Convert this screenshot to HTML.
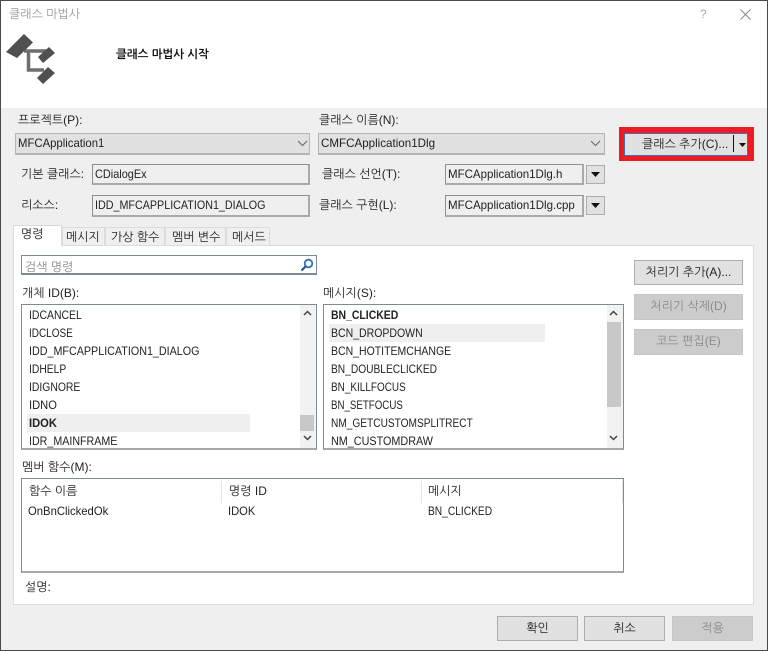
<!DOCTYPE html>
<html lang="ko"><head><meta charset="utf-8"><style>
html,body{margin:0;padding:0}
body{width:768px;height:651px;position:relative;overflow:hidden;background:#efefef;font:12px/16px "Liberation Sans","NanumGothic","Noto Sans CJK KR",sans-serif;color:#222;filter:blur(.25px)}
div,span{position:absolute;box-sizing:border-box}
span{white-space:nowrap;transform-origin:left center}
.btn{background:#e1e1e1;border:1px solid #adadad;text-align:center;line-height:23px}
.dis{background:#ccc;border-color:#c6c6c6;color:#8a8a8a}
.ed{background:#efefef;border:1px solid #8f8f8f;border-bottom-width:2px;border-right-width:2px;border-right-color:#aaa;border-bottom-color:#aaa}
.ed span{left:2px;top:2px;line-height:15px}
.cb{background:#e1e1e1;border:1px solid #b5b5b5;border-bottom-width:2px}
.cb span{left:2px;top:0;line-height:18px}
.lst{background:#fff;border:1px solid #7f8a99;border-bottom-width:2px;border-bottom-color:#a5a9ae}
.tab{background:#efefef;border:1px solid #dcdcdc;border-bottom:0;top:227px;height:18px}
.tab span{top:1px;line-height:16px}
.sb{background:#f2f2f2}
.it{left:7px;height:18px;line-height:18px}
.m{left:7px}
</style></head><body>
<div style="left:0;top:0;width:768px;height:108px;background:#fff"></div>
<span style="left:9px;top:6px;color:#9a9a9a">클래스 마법사</span>
<span style="left:700px;top:6px;color:#a8a8a8">?</span>
<svg style="position:absolute;left:740px;top:9px" width="11" height="11"><path d="M.5.5l10 10M10.500.5l-10 10" stroke="#8c8c8c" fill="none"/></svg>
<svg style="position:absolute;left:0;top:25px" width="70" height="70" viewBox="0 0 70 70"><path d="M24 26H47M28.500 26V45H44" stroke="#6e6e6e" stroke-width="3.500" fill="none"/><g fill="#505050"><path d="M6 27L24 9l9 8.500L17 33z"/><path d="M38 32L49 22l6 6-12 10z"/><path d="M37 53l11-11 7 6-12 11z"/></g></svg>
<span style="left:116px;top:47px;font-weight:bold;color:#111;font-size:11.500px">클래스 마법사 시작</span>

<span style="left:18px;top:112px">프로젝트(P):</span>
<span style="left:319px;top:112px">클래스 이름(N):</span>
<div class="cb" style="left:15px;top:133px;width:295px;height:22px"><span style="transform:scaleX(.945)">MFCApplication1</span></div>
<div class="cb" style="left:318px;top:133px;width:287px;height:22px"><span style="transform:scaleX(.966)">CMFCApplication1Dlg</span></div>
<svg style="position:absolute;left:297px;top:140px" width="11" height="8"><path d="M1 1l4.500 4.500L10 1" stroke="#666" fill="none"/></svg>
<svg style="position:absolute;left:590px;top:140px" width="11" height="8"><path d="M1 1l4.500 4.500L10 1" stroke="#666" fill="none"/></svg>
<span style="left:21px;top:166px">기본 클래스:</span>
<span style="left:21px;top:197px">리소스:</span>
<div class="ed" style="left:92px;top:164px;width:218px;height:21px"><span style="transform:scaleX(.91)">CDialogEx</span></div>
<div class="ed" style="left:92px;top:195px;width:218px;height:22px"><span style="transform:scaleX(.895)">IDD_MFCAPPLICATION1_DIALOG</span></div>
<span style="left:322px;top:166px">클래스 선언(T):</span>
<span style="left:319px;top:197px">클래스 구현(L):</span>
<div class="ed" style="left:445px;top:164px;width:139px;height:21px"><span style="transform:scaleX(.958)">MFCApplication1Dlg.h</span></div>
<div class="ed" style="left:445px;top:195px;width:139px;height:22px"><span style="transform:scaleX(.96)">MFCApplication1Dlg.cpp</span></div>
<div class="btn" style="left:586px;top:165px;width:19px;height:19px"></div>
<div class="btn" style="left:586px;top:196px;width:19px;height:19px"></div>
<svg style="position:absolute;left:591px;top:172px" width="9" height="5"><path d="M0 0h9L4.500 5z" fill="#111"/></svg>
<svg style="position:absolute;left:591px;top:203px" width="9" height="5"><path d="M0 0h9L4.500 5z" fill="#111"/></svg>

<div style="left:619px;top:127px;width:135px;height:34px;background:#ed1c24"></div>
<div style="left:624px;top:133px;width:124px;height:23px;background:#e1e1e1;border:1px solid #3f6fb5"></div>
<span style="left:642px;top:136px">클래스 추가(C)...</span>
<div style="left:733px;top:135px;width:1px;height:17px;background:#111"></div>
<svg style="position:absolute;left:739px;top:143px" width="7" height="4"><path d="M0 0h7L3.500 4z" fill="#111"/></svg>

<div style="left:13px;top:245px;width:741px;height:360px;background:#fff;border:1px solid #dcdcdc"></div>
<div class="tab" style="left:13px;top:225px;width:49px;height:21px;background:#fff;border-color:#d9d9d9"><span style="left:7px;top:0">명령</span></div>
<div class="tab" style="left:62px;width:43px"><span style="left:3px">메시지</span></div>
<div class="tab" style="left:105px;width:60px"><span style="left:5px">가상 함수</span></div>
<div class="tab" style="left:165px;width:61px"><span style="left:6px">멤버 변수</span></div>
<div class="tab" style="left:226px;width:44px"><span style="left:5px">메서드</span></div>

<div style="left:21px;top:255px;width:296px;height:20px;background:#fff;border:1px solid #7f8a99;border-bottom-width:2px"></div>
<span style="left:25px;top:259px;color:#8a8a8a">검색 명령</span>
<svg style="position:absolute;left:300px;top:258px" width="14" height="14"><circle cx="8.500" cy="5.500" r="3.800" fill="none" stroke="#2f74b8" stroke-width="1.800"/><path d="M5.500 8.500L1.500 12.500" stroke="#1f4f8a" stroke-width="2"/></svg>

<span style="left:22px;top:285px">개체 ID(B):</span>
<div class="lst" style="left:21px;top:304px;width:296px;height:146px;overflow:hidden">
<div style="left:5px;top:109px;width:223px;height:18px;background:#efefef"></div>
<span class="it" style="top:1px;transform:scaleX(.87)">IDCANCEL</span>
<span class="it" style="top:19px;transform:scaleX(.83)">IDCLOSE</span>
<span class="it" style="top:37px;transform:scaleX(.895)">IDD_MFCAPPLICATION1_DIALOG</span>
<span class="it" style="top:55px;transform:scaleX(.86)">IDHELP</span>
<span class="it" style="top:73px;transform:scaleX(.865)">IDIGNORE</span>
<span class="it" style="top:91px;transform:scaleX(.93)">IDNO</span>
<span class="it" style="top:109px;font-weight:bold;transform:scaleX(.93)">IDOK</span>
<span class="it" style="top:127px;transform:scaleX(.89)">IDR_MAINFRAME</span>
<div class="sb" style="left:278px;top:0;width:16px;height:143px"></div>
<div style="left:278px;top:110px;width:14px;height:16px;background:#c8c8c8"></div>
<svg style="position:absolute;left:281px;top:5px" width="9" height="6"><path d="M1 5l3.500-3.500L8 5" stroke="#444" stroke-width="1.500" fill="none"/></svg>
<svg style="position:absolute;left:281px;top:130px" width="9" height="6"><path d="M1 1l3.500 3.500L8 1" stroke="#444" stroke-width="1.500" fill="none"/></svg>
</div>

<span style="left:323px;top:285px">메시지(S):</span>
<div class="lst" style="left:323px;top:304px;width:301px;height:146px;overflow:hidden">
<div style="left:5px;top:19px;width:216px;height:18px;background:#efefef"></div>
<span class="it" style="top:1px;font-weight:bold;transform:scaleX(.87)">BN_CLICKED</span>
<span class="it" style="top:19px;transform:scaleX(.876)">BCN_DROPDOWN</span>
<span class="it" style="top:37px;transform:scaleX(.875)">BCN_HOTITEMCHANGE</span>
<span class="it" style="top:55px;transform:scaleX(.85)">BN_DOUBLECLICKED</span>
<span class="it" style="top:73px;transform:scaleX(.83)">BN_KILLFOCUS</span>
<span class="it" style="top:91px;transform:scaleX(.81)">BN_SETFOCUS</span>
<span class="it" style="top:109px;transform:scaleX(.845)">NM_GETCUSTOMSPLITRECT</span>
<span class="it" style="top:127px;transform:scaleX(.9)">NM_CUSTOMDRAW</span>
<div class="sb" style="left:283px;top:0;width:16px;height:143px"></div>
<div style="left:283px;top:17px;width:14px;height:85px;background:#c8c8c8"></div>
<svg style="position:absolute;left:285px;top:5px" width="9" height="6"><path d="M1 5l3.500-3.500L8 5" stroke="#444" stroke-width="1.500" fill="none"/></svg>
<svg style="position:absolute;left:285px;top:130px" width="9" height="6"><path d="M1 1l3.500 3.500L8 1" stroke="#444" stroke-width="1.500" fill="none"/></svg>
</div>

<div class="btn" style="left:634px;top:260px;width:109px;height:25px">처리기 추가(A)...</div>
<div class="btn dis" style="left:634px;top:294px;width:109px;height:26px">처리기 삭제(D)</div>
<div class="btn dis" style="left:634px;top:329px;width:109px;height:26px">코드 편집(E)</div>

<span style="left:22px;top:459px">멤버 함수(M):</span>
<div class="lst" style="left:21px;top:478px;width:603px;height:95px;overflow:hidden">
<div style="left:199px;top:2px;width:1px;height:22px;background:#e5e5e5"></div>
<div style="left:399px;top:2px;width:1px;height:22px;background:#e5e5e5"></div>
<div style="left:600px;top:2px;width:1px;height:22px;background:#e5e5e5"></div>
<span style="left:7px;top:4px">함수 이름</span>
<span style="left:207px;top:4px">명령 ID</span>
<span style="left:406px;top:4px">메시지</span>
<span style="left:6px;top:24px;transform:scaleX(.94)">OnBnClickedOk</span>
<span style="left:206px;top:24px;transform:scaleX(.93)">IDOK</span>
<span style="left:406px;top:24px;transform:scaleX(.85)">BN_CLICKED</span>
</div>
<span style="left:25px;top:579px">설명:</span>

<div class="btn" style="left:497px;top:616px;width:81px;height:25px">확인</div>
<div class="btn" style="left:584px;top:616px;width:81px;height:25px">취소</div>
<div class="btn dis" style="left:672px;top:616px;width:81px;height:25px">적용</div>

<div style="left:0;top:0;width:768px;height:651px;border:1px solid #4a4a4a"></div>
</body></html>
